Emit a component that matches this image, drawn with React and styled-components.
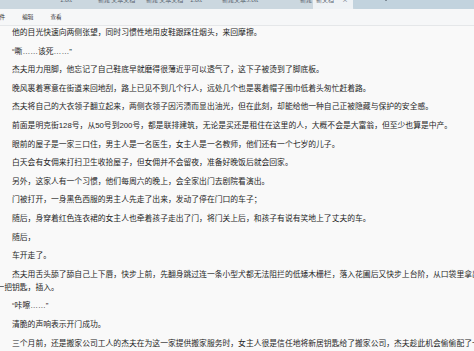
import styled, { createGlobalStyle } from "styled-components";

const GlobalStyle = createGlobalStyle`
  html, body {
    margin: 0;
    padding: 0;
    background: #f9f9f9;
    overflow: hidden;
  }
`;

const Window = styled.div`
  width: 474px;
  height: 351px;
  display: flex;
  flex-direction: column;
  overflow: hidden;
  font-family: "Noto Sans CJK SC", "Noto Sans", sans-serif;
`;

const TabBar = styled.div`
  height: 9px;
  flex-shrink: 0;
  display: flex;
  align-items: flex-end;
  background: #cbd7df;
  overflow: hidden;
`;

const Tab = styled.div`
  width: ${(p) => p.$w}px;
  height: 14px;
  flex-shrink: 0;
  box-sizing: border-box;
  padding-left: ${(p) => p.$pad || 0}px;
  display: flex;
  align-items: flex-start;
  gap: 8px;
  font-size: 6px;
  line-height: 9px;
  color: #56626d;
  white-space: nowrap;
  background: ${(p) => (p.$active ? "#eef2f5" : "transparent")};
`;

const TabTools = styled.div`
  flex: 1;
  height: 14px;
  display: flex;
  align-items: flex-start;
  gap: 10px;
  padding-left: 14px;
  background: #c2d3de;
  border-bottom-left-radius: 3px;
`;

const MenuBar = styled.div`
  height: 16px;
  flex-shrink: 0;
  display: flex;
  align-items: center;
  gap: 17px;
  margin-left: -6px;
  background: #f6f7f8;
  border-bottom: 1px solid #e5e7e9;
`;

const MenuItem = styled.span`
  font-size: 5.6px;
  color: #333;
  white-space: nowrap;
`;

const Editor = styled.div`
  flex: 1;
  margin-left: -3.6px;
  overflow: hidden;
  background: #f9f9f9;
`;

const Para = styled.p`
  margin: 0 0 5.6px;
  font-family: "Liberation Sans", "Noto Sans CJK SC", sans-serif;
  font-size: 7.8px;
  line-height: 13px;
  color: #262626;
  text-indent: 2em;
  white-space: pre;
`;

const TabIcon = ({ kind }) => (
  <svg width="6" height="10" viewBox="0 0 6 10">
    {kind === "plus" ? (
      <path d="M3 0v6M0 3h6" stroke="#3c4650" strokeWidth="1" />
    ) : (
      <rect x="2" y="0" width="2" height="3.5" rx="0.6" fill="#3c4650" />
    )}
  </svg>
);

const tabs = [
  { w: 50, pad: 18, icon: true },
  { w: 43, pad: 10, label: "1.txt" },
  { w: 49, pad: 5, label: "新建 文本文档" },
  { w: 44, pad: 4, label: "新建 文本文档" },
  { w: 32, pad: 4, label: "1.txt" },
  { w: 44, pad: 4, label: "新建文本3.txt" },
  { w: 51, pad: 38, label: "新建 文本文档" },
  { w: 40, pad: 3, label: "新文档", active: true },
];

const paragraphs = [
  "他的目光快速向两侧张望，同时习惯性地用皮鞋跟踩住烟头，来回摩擦。",
  "“嘶……该死……”",
  "杰夫用力甩脚，他忘记了自己鞋底早就磨得很薄近乎可以透气了，这下子被烫到了脚底板。",
  "晚风裹着寒意在街道来回地刮，路上已见不到几个行人，远处几个也是裹着帽子围巾低着头匆忙赶着路。",
  "杰夫将自己的大衣领子翻立起来，两侧衣领子因污渍而显出油光，但在此刻，却能给他一种自己正被隐藏与保护的安全感。",
  "前面是明克街128号，从50号到200号，都是联排建筑，无论是买还是租住在这里的人，大概不会是大富翁，但至少也算是中产。",
  "眼前的屋子是一家三口住，男主人是一名医生，女主人是一名教师，他们还有一个七岁的儿子。",
  "白天会有女佣来打扫卫生收拾屋子，但女佣并不会留夜，准备好晚饭后就会回家。",
  "另外，这家人有一个习惯，他们每周六的晚上，会全家出门去剧院看演出。",
  "门被打开，一身黑色西服的男主人先走了出来，发动了停在门口的车子；",
  "随后，身穿着红色连衣裙的女主人也牵着孩子走出了门，将门关上后，和孩子有说有笑地上了丈夫的车。",
  "随后，",
  "车开走了。",
  "杰夫用舌头舔了舔自己上下唇，快步上前，先翻身跳过连一条小型犬都无法阻拦的低矮木栅栏，落入花圃后又快步上台阶，从口袋里拿出\n一把钥匙，插入。",
  "“咔嚓……”",
  "清脆的声响表示开门成功。",
  "三个月前，还是搬家公司工人的杰夫在为这一家提供搬家服务时，女主人很是信任地将新居钥匙给了搬家公司，杰夫趁此机会偷偷配了一\n把钥匙。",
];

export default function App() {
  return (
    <Window>
      <GlobalStyle />
      <TabBar>
        {tabs.map((t, i) => (
          <Tab key={i} $w={t.w} $pad={t.pad} $active={t.active}>
            {t.icon ? <TabIcon /> : t.label}
            {t.active && <span>×</span>}
          </Tab>
        ))}
        <TabTools>
          <TabIcon />
          <TabIcon kind="plus" />
        </TabTools>
      </TabBar>
      <MenuBar>
        <MenuItem>文件</MenuItem>
        <MenuItem>编辑</MenuItem>
        <MenuItem>查看</MenuItem>
      </MenuBar>
      <Editor>
        {paragraphs.map((text, i) => (
          <Para key={i}>{text}</Para>
        ))}
      </Editor>
    </Window>
  );
}
